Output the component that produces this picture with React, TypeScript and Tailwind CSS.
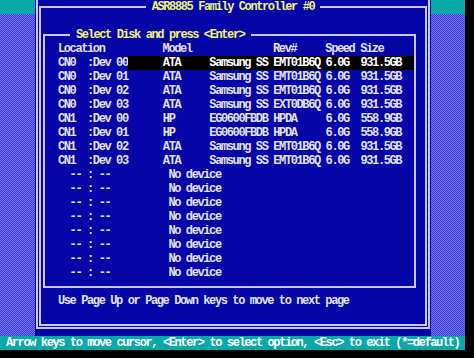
import React from "react"

const devices = [
  { loc: "CN0  :Dev 00", rest: "      ATA     Samsung SS EMT01B6Q 6.0G  931.5GB" },
  { loc: "CN0  :Dev 01", rest: "      ATA     Samsung SS EMT01B6Q 6.0G  931.5GB" },
  { loc: "CN0  :Dev 02", rest: "      ATA     Samsung SS EMT01B6Q 6.0G  931.5GB" },
  { loc: "CN0  :Dev 03", rest: "      ATA     Samsung SS EXT0DB6Q 6.0G  931.5GB" },
  { loc: "CN1  :Dev 00", rest: "      HP      EG0600FBDB HPDA     6.0G  558.9GB" },
  { loc: "CN1  :Dev 01", rest: "      HP      EG0600FBDB HPDA     6.0G  558.9GB" },
  { loc: "CN1  :Dev 02", rest: "      ATA     Samsung SS EMT01B6Q 6.0G  931.5GB" },
  { loc: "CN1  :Dev 03", rest: "      ATA     Samsung SS EMT01B6Q 6.0G  931.5GB" },
]

const emptySlots = Array.from({ length: 8 })

function SidePanel({ width }: { width: string }) {
  return (
    <div className={`${width} flex flex-col`}>
      <div className="h-[14px] bg-[#0aa8a8]" />
      <div className="flex-1 bg-[repeating-conic-gradient(#3a3ad6_0_25%,#7676f2_0_50%)] bg-[length:2px_2px]" />
    </div>
  )
}

export default function App() {
  return (
    <div className="w-[474px] h-[358px] bg-black overflow-hidden font-['Liberation_Mono',monospace] font-bold text-[12px] leading-[14px] tracking-[-1.39px]">
      <div className="w-[465px] flex flex-col">
        <div className="flex h-[336px]">
          <SidePanel width="w-[35px]" />

          <div className="w-[396px] h-[336px] bg-[#0606a8] px-[1px] text-[#e2e2ea]">
            <div className="border-x-2 border-b-2 border-[#c8c8f2] px-[1px] pb-[1px]">
              <fieldset className="border-2 border-[#c8c8f2] pb-[16px]">
                <legend className="mx-auto px-[6px] text-[#f2f27c] whitespace-pre">
                  ASR8885 Family Controller #0
                </legend>

                <fieldset className="border-2 border-[#c8c8f2] ml-[2px] mr-[9px] mt-[14px] pb-[6px]">
                  <legend className="ml-[25px] px-[6px] text-[#f2f27c] whitespace-pre">
                    Select Disk and press &lt;Enter&gt;
                  </legend>

                  <div className="h-[14px] pl-[13px] whitespace-pre">
                    {"Location          Model              Rev#     Speed Size"}
                  </div>

                  {devices.map((d, i) => (
                    <div key={i} className="flex h-[14px] pl-[13px] whitespace-pre">
                      <span className="w-[70px] shrink-0">{d.loc}</span>
                      <span className={`flex-1 ${i === 0 ? "bg-black text-white" : ""}`}>
                        {d.rest}
                      </span>
                    </div>
                  ))}

                  {emptySlots.map((_, i) => (
                    <div key={i} className="h-[14px] pl-[13px] whitespace-pre">
                      {"  -- : --          No device"}
                    </div>
                  ))}
                </fieldset>

                <div className="mt-[6px] h-[14px] pl-[17px] whitespace-pre">
                  Use Page Up or Page Down keys to move to next page
                </div>
              </fieldset>
            </div>
          </div>

          <SidePanel width="w-[34px]" />
        </div>

        <div className="h-[14px] bg-[#0aa8a8] pl-[6px] text-white whitespace-pre">
          Arrow keys to move cursor, &lt;Enter&gt; to select option, &lt;Esc&gt; to exit (*=default)
        </div>
      </div>
    </div>
  )
}
